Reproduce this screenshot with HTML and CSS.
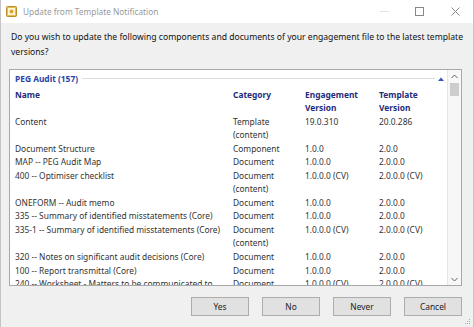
FILE: index.html
```html
<!DOCTYPE html>
<html lang="en">
<head>
    <meta charset="UTF-8">
    <title>Update from Template Notification</title>
    <link rel="stylesheet" href="styles.css">
</head>
<body>

<!-- window -->
<div class="window">

    <!-- title bar -->
    <div class="titlebar">
        <svg class="app-icon" width="11" height="11" viewBox="0 0 11 11">
            <rect x="0.5" y="0.5" width="10" height="10" rx="1" fill="#e2bc55" stroke="#b8902a"/>
            <rect x="2" y="2" width="7" height="7" fill="#fff6d6"/>
            <circle cx="5.5" cy="5.5" r="2" fill="#d9a730"/>
        </svg>
        <span class="title">Update from Template Notification</span>
        <div class="controls">
            <span class="ctl-min"></span>
            <span class="ctl-max"></span>
            <svg class="ctl-close" width="9" height="9" viewBox="0 0 9 9">
                <path d="M0.5 0.5 L8.5 8.5 M8.5 0.5 L0.5 8.5" stroke="#888" stroke-width="1"/>
            </svg>
        </div>
    </div>

    <!-- content -->
    <div class="content">
        <p class="question">Do you wish to update the following components and documents of your engagement file to the latest template<br>versions?</p>

        <div class="list-frame">
            <div class="list-view">
                <div class="group-head">
                    <span class="group-title">PEG Audit (157)</span>
                    <span class="group-line"></span>
                    <svg class="group-toggle" width="6" height="4" viewBox="0 0 6 4">
                        <path d="M0 4 L3 0.5 L6 4 Z" fill="#3456c8"/>
                    </svg>
                </div>

                <table class="items">
                    <colgroup>
                        <col class="c-name">
                        <col class="c-cat">
                        <col class="c-eng">
                        <col class="c-tpl">
                    </colgroup>
                    <thead>
                        <tr>
                            <th>Name</th>
                            <th>Category</th>
                            <th>Engagement<br>Version</th>
                            <th>Template<br>Version</th>
                        </tr>
                    </thead>
                    <tbody>
                        <tr><td>Content</td><td>Template<br>(content)</td><td>19.0.310</td><td>20.0.286</td></tr>
                        <tr><td>Document Structure</td><td>Component</td><td>1.0.0</td><td>2.0.0</td></tr>
                        <tr><td>MAP -- PEG Audit Map</td><td>Document</td><td>1.0.0.0</td><td>2.0.0.0</td></tr>
                        <tr><td>400 -- Optimiser checklist</td><td>Document<br>(content)</td><td>1.0.0.0 (CV)</td><td>2.0.0.0 (CV)</td></tr>
                        <tr><td>ONEFORM -- Audit memo</td><td>Document</td><td>1.0.0.0</td><td>2.0.0.0</td></tr>
                        <tr><td>335 -- Summary of identified misstatements (Core)</td><td>Document</td><td>1.0.0.0</td><td>2.0.0.0</td></tr>
                        <tr><td>335-1 -- Summary of identified misstatements (Core)</td><td>Document<br>(content)</td><td>1.0.0.0 (CV)</td><td>2.0.0.0 (CV)</td></tr>
                        <tr><td>320 -- Notes on significant audit decisions (Core)</td><td>Document</td><td>1.0.0.0</td><td>2.0.0.0</td></tr>
                        <tr><td>100 -- Report transmittal (Core)</td><td>Document</td><td>1.0.0.0</td><td>2.0.0.0</td></tr>
                        <tr><td>240 -- Worksheet - Matters to be communicated to</td><td>Document</td><td>1.0.0.0 (CV)</td><td>2.0.0.0 (CV)</td></tr>
                    </tbody>
                </table>
            </div>

            <!-- scrollbar -->
            <div class="scrollbar">
                <svg class="arrow" width="7" height="5" viewBox="0 0 7 5">
                    <path d="M0.5 4 L3.5 1 L6.5 4" fill="none" stroke="#606060" stroke-width="1"/>
                </svg>
                <div class="track">
                    <div class="thumb"></div>
                </div>
                <svg class="arrow" width="7" height="5" viewBox="0 0 7 5">
                    <path d="M0.5 1 L3.5 4 L6.5 1" fill="none" stroke="#606060" stroke-width="1"/>
                </svg>
            </div>
        </div>

        <!-- buttons -->
        <div class="buttons">
            <button class="btn">Yes</button>
            <button class="btn">No</button>
            <button class="btn">Never</button>
            <button class="btn">Cancel</button>
        </div>

        <svg class="grip" width="7" height="7" viewBox="0 0 7 7">
            <rect x="5" y="1" width="1" height="1" fill="#aaa"/>
            <rect x="3" y="3" width="1" height="1" fill="#aaa"/>
            <rect x="5" y="3" width="1" height="1" fill="#aaa"/>
            <rect x="1" y="5" width="1" height="1" fill="#aaa"/>
            <rect x="3" y="5" width="1" height="1" fill="#aaa"/>
            <rect x="5" y="5" width="1" height="1" fill="#aaa"/>
        </svg>
    </div>
</div>

</body>
</html>
```

FILE: styles.css
```css
/* page */
html, body {
    margin: 0;
    padding: 0;
    width: 474px;
    height: 327px;
    overflow: hidden;
    background: #f0f0f0;
    font-family: 'Noto Sans', 'Open Sans', sans-serif;
    font-size: 8.4px;
    color: #222;
}

.window {
    height: 327px;
    width: 474px;
    display: flex;
    flex-direction: column;
    border-left: 1px solid #c4c4c4;
    border-right: 1px solid #c4c4c4;
    box-sizing: border-box;
}

/* title bar */
.titlebar {
    height: 23px;
    background: #fff;
    display: flex;
    align-items: center;
    padding-left: 5px;
    flex-shrink: 0;
}

.app-icon {
    margin-right: 6px;
}

.title {
    color: #9a9a9a;
    font-size: 8.3px;
    flex: 1;
}

.controls {
    display: flex;
    align-items: center;
    height: 23px;
}

.ctl-min {
    width: 9px;
    height: 1px;
    background: #e2e2e2;
    margin-right: 26px;
}

.ctl-max {
    width: 7px;
    height: 7px;
    border: 1px solid #888;
    margin-right: 27px;
}

.ctl-close {
    margin-right: 13px;
}

/* body */
.content {
    flex: 1;
    position: relative;
    padding: 7px 11px 0 8px;
}

.question {
    margin: 0 -8px 2px 2px;
    line-height: 15px;
    font-size: 8.6px;
    white-space: nowrap;
    color: #111;
    height: 37px;
}

/* list */
.list-frame {
    height: 215px;
    display: flex;
    border: 1px solid #a8a8a8;
    background: #fff;
    overflow: hidden;
}

.list-view {
    flex: 1;
    overflow: hidden;
    padding: 1px 0 0 5px;
}

.group-head {
    display: flex;
    align-items: center;
    height: 14px;
    padding-right: 3px;
}

.group-title {
    color: #2b43a6;
    font-weight: bold;
    margin-right: 4px;
}

.group-line {
    flex: 1;
    height: 1px;
    background: #dcdcdc;
    margin-right: 3px;
}

.group-toggle {
    margin-top: 2px;
}

.items {
    border-collapse: collapse;
    table-layout: fixed;
    width: 433px;
    line-height: 13px;
    margin-top: 3px;
}

.c-name { width: 218px; }
.c-cat { width: 72px; }
.c-eng { width: 74px; }
.c-tpl { width: 69px; }

.items th {
    text-align: left;
    vertical-align: top;
    color: #1f2c7c;
    font-weight: bold;
    padding: 0 0 1px 0;
}

.items td {
    vertical-align: top;
    padding: 0 0 0.7px 0;
    white-space: nowrap;
    color: #333;
}

/* scrollbar */
.scrollbar {
    width: 13px;
    background: #f7f7f7;
    border-left: 1px solid #e6e6e6;
    display: flex;
    flex-direction: column;
    align-items: center;
    padding: 4px 0 3px;
}

.track {
    flex: 1;
    width: 100%;
    padding-top: 4px;
}

.thumb {
    height: 13px;
    margin: 0 2px;
    background: #cdcdcd;
}

/* buttons */
.buttons {
    display: flex;
    justify-content: flex-end;
    gap: 13px;
    margin-top: 11px;
}

.btn {
    width: 58px;
    height: 19px;
    background: #e1e1e1;
    border: 1px solid #adadad;
    font-family: 'Noto Sans', 'Open Sans', sans-serif;
    font-size: 8.4px;
    color: #222;
    padding: 0;
}

.grip {
    position: absolute;
    right: 2px;
    bottom: 2px;
}
```
